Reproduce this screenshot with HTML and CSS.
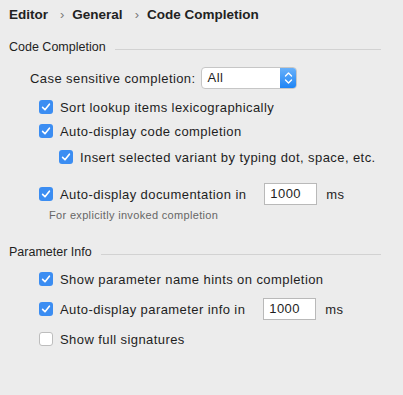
FILE: index.html
```html
<!DOCTYPE html>
<html lang="en">
<head>
    <meta charset="UTF-8">
    <title>Code Completion</title>
    <link rel="stylesheet" href="styles.css">
</head>
<body>
    <div class="crumbs">
        <span>Editor</span>
        <span class="sep">&#8250;</span>
        <span>General</span>
        <span class="sep">&#8250;</span>
        <span>Code Completion</span>
    </div>

    <div class="section-title first">
        <span>Code Completion</span>
        <div class="rule"></div>
    </div>

    <div class="select-row">
        <span>Case sensitive completion:</span>
        <div class="select">
            <span class="select-value">All</span>
            <span class="select-arrows">
                <svg width="17" height="22" viewBox="0 0 17 22">
                    <path d="M5.5 9 L8.5 6 L11.5 9" fill="none" stroke="#fff" stroke-width="1.4" stroke-linecap="round" stroke-linejoin="round"/>
                    <path d="M5.5 13 L8.5 16 L11.5 13" fill="none" stroke="#fff" stroke-width="1.4" stroke-linecap="round" stroke-linejoin="round"/>
                </svg>
            </span>
        </div>
    </div>

    <div class="option sort">
        <span class="box checked"><svg width="14" height="14" viewBox="0 0 14 14"><path d="M3.6 7.4 L6 9.8 L10.4 4.2" fill="none" stroke="#fff" stroke-width="1.6" stroke-linecap="round" stroke-linejoin="round"/></svg></span>
        <span>Sort lookup items lexicographically</span>
    </div>
    <div class="option auto">
        <span class="box checked"><svg width="14" height="14" viewBox="0 0 14 14"><path d="M3.6 7.4 L6 9.8 L10.4 4.2" fill="none" stroke="#fff" stroke-width="1.6" stroke-linecap="round" stroke-linejoin="round"/></svg></span>
        <span>Auto-display code completion</span>
    </div>
    <div class="option nested">
        <span class="box checked"><svg width="14" height="14" viewBox="0 0 14 14"><path d="M3.6 7.4 L6 9.8 L10.4 4.2" fill="none" stroke="#fff" stroke-width="1.6" stroke-linecap="round" stroke-linejoin="round"/></svg></span>
        <span>Insert selected variant by typing dot, space, etc.</span>
    </div>
    <div class="option doc">
        <span class="box checked"><svg width="14" height="14" viewBox="0 0 14 14"><path d="M3.6 7.4 L6 9.8 L10.4 4.2" fill="none" stroke="#fff" stroke-width="1.6" stroke-linecap="round" stroke-linejoin="round"/></svg></span>
        <span>Auto-display documentation in</span>
        <span class="field">1000</span>
        <span class="unit">ms</span>
    </div>
    <div class="hint">For explicitly invoked completion</div>

    <div class="section-title params">
        <span>Parameter Info</span>
        <div class="rule"></div>
    </div>

    <div class="option hints">
        <span class="box checked"><svg width="14" height="14" viewBox="0 0 14 14"><path d="M3.6 7.4 L6 9.8 L10.4 4.2" fill="none" stroke="#fff" stroke-width="1.6" stroke-linecap="round" stroke-linejoin="round"/></svg></span>
        <span>Show parameter name hints on completion</span>
    </div>
    <div class="option param-info">
        <span class="box checked"><svg width="14" height="14" viewBox="0 0 14 14"><path d="M3.6 7.4 L6 9.8 L10.4 4.2" fill="none" stroke="#fff" stroke-width="1.6" stroke-linecap="round" stroke-linejoin="round"/></svg></span>
        <span>Auto-display parameter info in</span>
        <span class="field">1000</span>
        <span class="unit">ms</span>
    </div>
    <div class="option full-sig">
        <span class="box"></span>
        <span>Show full signatures</span>
    </div>
</body>
</html>
```

FILE: styles.css
```css
* {
    margin: 0;
    padding: 0;
    box-sizing: border-box;
}

body {
    background: #ececec;
    font-family: "Liberation Sans", Arial, sans-serif;
    font-size: 13px;
    letter-spacing: 0.42px;
    color: #1e1e1e;
    width: 403px;
    height: 395px;
    overflow: hidden;
}

.crumbs {
    display: flex;
    align-items: center;
    height: 28px;
    padding-left: 9px;
    font-size: 13.5px;
    font-weight: bold;
    letter-spacing: 0;
    color: #222;
}

.crumbs .sep {
    font-weight: normal;
    color: #7a7a7a;
    font-size: 13px;
    margin: 0 8px 0 12px;
}

.section-title {
    display: flex;
    align-items: center;
    height: 20px;
    padding-left: 9px;
    padding-right: 22px;
    font-size: 12.5px;
    letter-spacing: 0;
}

.section-title.first {
    margin-top: 9px;
}

.section-title.params {
    margin-top: 20px;
}

.rule {
    flex: 1;
    height: 1px;
    background: #d2d2d2;
    margin: 4px 0 0 9px;
}

.select-row {
    display: flex;
    align-items: center;
    height: 22px;
    margin-top: 10px;
    padding-left: 30px;
}

.select {
    display: flex;
    width: 96px;
    height: 22px;
    margin-left: 5px;
    background: #fff;
    border: 1px solid #c6c6c6;
    border-radius: 4px;
    overflow: hidden;
}

.select-value {
    flex: 1;
    line-height: 20px;
    padding-left: 6px;
}

.select-arrows {
    width: 17px;
    margin: -1px -1px -1px 0;
    background: linear-gradient(#6cb3fa, #1a82f5);
    border-radius: 0 4px 4px 0;
}

.select-arrows svg {
    display: block;
}

.option {
    display: flex;
    align-items: center;
    height: 20px;
    padding-left: 39px;
}

.option.sort { margin-top: 8px; }
.option.auto { margin-top: 4px; }
.option.nested { margin-top: 6px; padding-left: 59px; }
.option.doc { margin-top: 16px; height: 22px; }
.option.hints { margin-top: 7px; }
.option.param-info { margin-top: 9px; height: 22px; }
.option.full-sig { margin-top: 9px; }

.box {
    width: 14px;
    height: 14px;
    margin-right: 7px;
    border-radius: 3px;
    background: #fff;
    border: 1px solid #bdbdbd;
    flex-shrink: 0;
}

.box.checked {
    background: #3b8df2;
    border: none;
}

.box svg {
    display: block;
}

.field {
    width: 53px;
    height: 22px;
    line-height: 20px;
    margin-left: 18px;
    padding-left: 5px;
    background: #fff;
    border: 1px solid #b9b9b9;
}

.unit {
    margin-left: 9px;
}

.hint {
    margin-top: 3px;
    padding-left: 49px;
    height: 14px;
    line-height: 14px;
    font-size: 11px;
    letter-spacing: 0.33px;
    color: #666;
}
```
